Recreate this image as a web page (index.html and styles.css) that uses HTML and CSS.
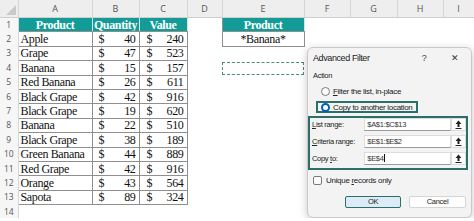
FILE: index.html
```html
<!DOCTYPE html>
<html lang="en">
<head>
    <meta charset="UTF-8">
    <title>Advanced Filter</title>
    <link rel="stylesheet" href="styles.css">
</head>
<body>
    <!-- Worksheet -->
    <table class="sheet">
        <colgroup>
            <col style="width:18px"><col style="width:74px"><col style="width:47px"><col style="width:48px"><col style="width:35px">
            <col style="width:82px"><col style="width:46px"><col style="width:47px"><col style="width:46px"><col style="width:31px">
        </colgroup>
        <tr class="hdr">
            <td class="corner"><span class="tri"></span></td>
            <td class="hd">A</td><td class="hd">B</td><td class="hd">C</td><td class="hd">D</td><td class="hd">E</td>
            <td class="hd">F</td><td class="hd">G</td><td class="hd">H</td><td class="hd">I</td>
        </tr>
        <tr>
            <td class="rn">1</td><td class="th">Product</td><td class="th">Quantity</td><td class="th">Value</td><td></td>
            <td class="th">Product</td><td></td><td></td><td></td><td></td>
        </tr>
        <tr>
            <td class="rn">2</td><td class="c">Apple</td>
            <td class="c"><div class="num"><span>$</span><span>40</span></div></td>
            <td class="c"><div class="num wide"><span>$</span><span>240</span></div></td><td></td>
            <td class="c crit">*Banana*</td><td></td><td></td><td></td><td></td>
        </tr>
        <tr>
            <td class="rn">3</td><td class="c">Grape</td>
            <td class="c"><div class="num"><span>$</span><span>47</span></div></td>
            <td class="c"><div class="num wide"><span>$</span><span>523</span></div></td><td></td>
            <td></td><td></td><td></td><td></td><td></td>
        </tr>
        <tr>
            <td class="rn">4</td><td class="c">Banana</td>
            <td class="c"><div class="num"><span>$</span><span>15</span></div></td>
            <td class="c"><div class="num wide"><span>$</span><span>157</span></div></td><td></td>
            <td class="copy-cell"><div class="marquee"></div></td><td></td><td></td><td></td><td></td>
        </tr>
        <tr>
            <td class="rn">5</td><td class="c">Red Banana</td>
            <td class="c"><div class="num"><span>$</span><span>26</span></div></td>
            <td class="c"><div class="num wide"><span>$</span><span>611</span></div></td><td></td>
            <td></td><td></td><td></td><td></td><td></td>
        </tr>
        <tr>
            <td class="rn">6</td><td class="c">Black Grape</td>
            <td class="c"><div class="num"><span>$</span><span>42</span></div></td>
            <td class="c"><div class="num wide"><span>$</span><span>916</span></div></td><td></td>
            <td></td><td></td><td></td><td></td><td></td>
        </tr>
        <tr>
            <td class="rn">7</td><td class="c">Black Grape</td>
            <td class="c"><div class="num"><span>$</span><span>19</span></div></td>
            <td class="c"><div class="num wide"><span>$</span><span>620</span></div></td><td></td>
            <td></td><td></td><td></td><td></td><td></td>
        </tr>
        <tr>
            <td class="rn">8</td><td class="c">Banana</td>
            <td class="c"><div class="num"><span>$</span><span>22</span></div></td>
            <td class="c"><div class="num wide"><span>$</span><span>510</span></div></td><td></td>
            <td></td><td></td><td></td><td></td><td></td>
        </tr>
        <tr>
            <td class="rn">9</td><td class="c">Black Grape</td>
            <td class="c"><div class="num"><span>$</span><span>38</span></div></td>
            <td class="c"><div class="num wide"><span>$</span><span>189</span></div></td><td></td>
            <td></td><td></td><td></td><td></td><td></td>
        </tr>
        <tr>
            <td class="rn">10</td><td class="c">Green Banana</td>
            <td class="c"><div class="num"><span>$</span><span>44</span></div></td>
            <td class="c"><div class="num wide"><span>$</span><span>889</span></div></td><td></td>
            <td></td><td></td><td></td><td></td><td></td>
        </tr>
        <tr>
            <td class="rn">11</td><td class="c">Red Grape</td>
            <td class="c"><div class="num"><span>$</span><span>42</span></div></td>
            <td class="c"><div class="num wide"><span>$</span><span>916</span></div></td><td></td>
            <td></td><td></td><td></td><td></td><td></td>
        </tr>
        <tr>
            <td class="rn">12</td><td class="c">Orange</td>
            <td class="c"><div class="num"><span>$</span><span>43</span></div></td>
            <td class="c"><div class="num wide"><span>$</span><span>564</span></div></td><td></td>
            <td></td><td></td><td></td><td></td><td></td>
        </tr>
        <tr>
            <td class="rn">13</td><td class="c">Sapota</td>
            <td class="c"><div class="num"><span>$</span><span>89</span></div></td>
            <td class="c"><div class="num wide"><span>$</span><span>324</span></div></td><td></td>
            <td></td><td></td><td></td><td></td><td></td>
        </tr>
        <tr>
            <td class="rn">14</td><td></td><td></td><td></td><td></td>
            <td></td><td></td><td></td><td></td><td></td>
        </tr>
    </table>

    <!-- Advanced Filter dialog -->
    <div class="dialog">
        <div class="dlg-title">
            <span class="dlg-name">Advanced Filter</span>
            <span class="dlg-help">?</span>
            <span class="dlg-close">&#x2715;</span>
        </div>
        <div class="dlg-label">Action</div>
        <div class="radio-row"><span class="radio"></span><span><u>F</u>ilter the list, in-place</span></div>
        <div class="radio-row selected"><span class="radio on"></span><span>Copy to another location</span></div>

        <div class="ranges">
            <div class="range-row">
                <span class="range-label"><u>L</u>ist range:</span>
                <span class="range-input">$A$1:$C$13</span>
                <span class="range-btn"><svg width="7" height="9" viewBox="0 0 7 9"><path d="M3.5 0.5 L6.5 4 L4.5 4 L4.5 7 L2.5 7 L2.5 4 L0.5 4 Z" fill="#222"/><rect x="0.5" y="8" width="6" height="1" fill="#222"/></svg></span>
            </div>
            <div class="range-row">
                <span class="range-label"><u>C</u>riteria range:</span>
                <span class="range-input">$E$1:$E$2</span>
                <span class="range-btn"><svg width="7" height="9" viewBox="0 0 7 9"><path d="M3.5 0.5 L6.5 4 L4.5 4 L4.5 7 L2.5 7 L2.5 4 L0.5 4 Z" fill="#222"/><rect x="0.5" y="8" width="6" height="1" fill="#222"/></svg></span>
            </div>
            <div class="range-row">
                <span class="range-label">Copy <u>t</u>o:</span>
                <span class="range-input">$E$4<span class="caret"></span></span>
                <span class="range-btn"><svg width="7" height="9" viewBox="0 0 7 9"><path d="M3.5 0.5 L6.5 4 L4.5 4 L4.5 7 L2.5 7 L2.5 4 L0.5 4 Z" fill="#222"/><rect x="0.5" y="8" width="6" height="1" fill="#222"/></svg></span>
            </div>
        </div>

        <div class="check-row"><span class="checkbox"></span><span>Unique <u>r</u>ecords only</span></div>

        <div class="dlg-buttons">
            <span class="btn primary">OK</span>
            <span class="btn">Cancel</span>
        </div>
    </div>
</body>
</html>
```
FILE: styles.css
```css
body {
    margin: 0;
    background: #ffffff;
    overflow: hidden;
    position: relative;
}

/* Worksheet */
.sheet {
    border-collapse: collapse;
    table-layout: fixed;
    width: 474px;
    font-family: "Liberation Serif", "Times New Roman", serif;
    font-size: 12px;
    letter-spacing: -0.35px;
    color: #111;
}

.sheet td {
    padding: 0;
    height: 13.4px;
    line-height: 12px;
    white-space: nowrap;
    overflow: hidden;
}

.sheet tr.hdr td {
    height: 17px;
}

.hd {
    background: #eeeeee;
    border-right: 1px solid #d6d6d6;
    border-bottom: 1px solid #cfcfcf;
    text-align: center;
    font-family: "Open Sans", "Liberation Sans", sans-serif;
    font-size: 9px;
    letter-spacing: 0;
    color: #555;
}

.corner {
    background: #eeeeee;
    border-right: 1px solid #d6d6d6;
    border-bottom: 1px solid #cfcfcf;
    text-align: right;
    vertical-align: bottom;
}

.tri {
    display: inline-block;
    width: 0;
    height: 0;
    border-left: 10px solid transparent;
    border-bottom: 10px solid #c9c9c9;
    margin: 0 2px 2px 0;
    vertical-align: bottom;
}

.rn {
    background: #f6f6f6;
    border-right: 1px solid #d6d6d6;
    text-align: center;
    font-family: "Open Sans", "Liberation Sans", sans-serif;
    font-size: 8.5px;
    letter-spacing: 0;
    color: #555;
}

.th {
    background: #139c97;
    color: #ffffff;
    font-weight: bold;
    text-align: center;
    border: 1px solid #8f8f8f;
    border-right-color: #cfe7e6;
}

.c {
    border: 1px solid #8f8f8f;
    padding-left: 2px !important;
}

.crit {
    text-align: center;
    padding-left: 0 !important;
}

.num {
    display: flex;
    justify-content: space-between;
    padding: 0 3px 0 4px;
}

.num.wide {
    padding-left: 5px;
}

.copy-cell {
    vertical-align: top;
}

.marquee {
    height: 11px;
    margin-top: 1px;
    border: 1.5px dashed #4d8b73;
}

/* Dialog */
.dialog {
    position: absolute;
    left: 307px;
    top: 47px;
    width: 165px;
    height: 171px;
    box-sizing: border-box;
    background: #f3f3f3;
    border: 1px solid #c9c9c9;
    border-radius: 6px;
    box-shadow: 0 2px 8px rgba(0, 0, 0, 0.22);
    font-family: "Liberation Sans", Arial, sans-serif;
    font-size: 8px;
    letter-spacing: -0.3px;
    color: #222;
}

.dlg-title {
    display: grid;
    grid-template-columns: 1fr 30px 32px;
    align-items: center;
    height: 19px;
    padding-left: 5px;
}

.dlg-name {
    font-size: 9px;
    letter-spacing: -0.4px;
    color: #1a1a1a;
}

.dlg-help {
    text-align: center;
    font-size: 9px;
    color: #444;
}

.dlg-close {
    text-align: center;
    font-size: 9px;
    color: #333;
}

.dlg-label {
    margin: 4px 0 0 5px;
    line-height: 10px;
    font-size: 7.5px;
}

.radio-row {
    display: flex;
    align-items: center;
    gap: 3px;
    height: 10px;
    margin: 5px 0 0 13px;
}

.radio-row.selected {
    box-sizing: border-box;
    width: 102px;
    height: 12px;
    margin: 5px 0 0 8px;
    padding-left: 3px;
    border: 2px solid #2b6f6b;
}

.radio {
    width: 9px;
    height: 9px;
    box-sizing: border-box;
    border-radius: 50%;
    border: 1px solid #7a7a7a;
    background: #fbfbfb;
    flex-shrink: 0;
}

.radio.on {
    border: 2.5px solid #005fb8;
    background: #ffffff;
}

.ranges {
    box-sizing: border-box;
    width: 160px;
    height: 54px;
    margin-top: 3px;
    padding: 0 0 3px 2px;
    border: 2px solid #2b6f6b;
    display: flex;
    flex-direction: column;
    gap: 4px;
}

.range-row {
    display: flex;
    align-items: center;
    height: 13px;
}

.range-label {
    width: 53px;
    font-size: 7.5px;
}

.range-input {
    box-sizing: border-box;
    width: 88px;
    height: 13px;
    line-height: 12px;
    padding-left: 2px;
    background: #ffffff;
    border: 1px solid #dcdcdc;
    border-bottom-color: #9a9a9a;
    font-size: 7.5px;
    color: #333;
}

.caret {
    display: inline-block;
    width: 1px;
    height: 8px;
    background: #111;
    vertical-align: -1px;
}

.range-btn {
    box-sizing: border-box;
    width: 15px;
    height: 13px;
    background: #ffffff;
    border: 1px solid #dcdcdc;
    display: flex;
    align-items: center;
    justify-content: center;
}

.check-row {
    display: flex;
    align-items: center;
    gap: 4px;
    height: 9px;
    margin: 6px 0 0 5px;
}

.checkbox {
    width: 9px;
    height: 9px;
    box-sizing: border-box;
    border: 1px solid #7a7a7a;
    border-radius: 2px;
    background: #fbfbfb;
}

.dlg-buttons {
    display: flex;
    gap: 8px;
    margin: 11px 0 0 37px;
}

.btn {
    box-sizing: border-box;
    width: 57px;
    height: 12px;
    line-height: 10px;
    text-align: center;
    background: #fdfdfd;
    border: 1px solid #d6d6d6;
    border-radius: 2px;
    font-size: 7.5px;
}

.btn.primary {
    width: 56px;
    background: #dcebf5;
    border: 1.5px solid #2b6f6b;
}
```
